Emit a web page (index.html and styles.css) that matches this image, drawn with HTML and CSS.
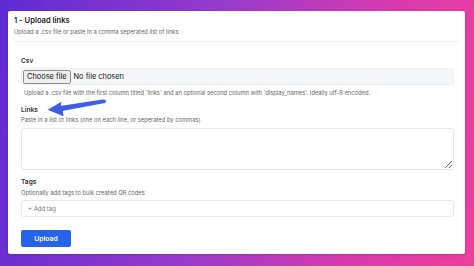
FILE: index.html
```html
<!DOCTYPE html>
<html lang="en">
<head>
    <meta charset="UTF-8">
    <title>Upload links</title>
    <link rel="stylesheet" href="styles.css">
</head>
<body>
    <div class="card">
        <div class="card-header">
            <h1 class="title">1 - Upload links</h1>
            <p class="subtitle">Upload a .csv file or paste in a comma seperated list of links</p>
        </div>

        <div class="card-body">
            <div class="field csv-field">
                <label class="label">Csv</label>
                <div class="file-box">
                    <button class="file-button">Choose file</button>
                    <span class="file-name">No file chosen</span>
                </div>
                <p class="help indent">Upload a .csv file with the first column titled 'links' and an optional second column with 'display_names'. Ideally utf-8 encoded.</p>
            </div>

            <div class="field">
                <label class="label">Links</label>
                <p class="help">Paste in a list of links (one on each line, or seperated by commas)</p>
                <textarea class="links-input"></textarea>
            </div>

            <div class="field">
                <label class="label tags-label">Tags</label>
                <p class="help">Optionally add tags to bulk created QR codes</p>
                <div class="tag-input">+ Add tag</div>
            </div>

            <button class="upload-button">Upload</button>
        </div>
    </div>

    <svg class="arrow" width="76" height="32" viewBox="0 0 76 32">
        <path d="M6 19 L22.5 9.5 L21.5 14 L64 7.5 Q69 9.5 65 12.8 L23.5 20.5 L24.5 26.5 Z"
              fill="#3c5de9" stroke="#ffffff" stroke-width="1.4" stroke-linejoin="round"/>
    </svg>
</body>
</html>
```

FILE: styles.css
```css
* {
    margin: 0;
    padding: 0;
    box-sizing: border-box;
    font-family: 'Inter', 'Liberation Sans', sans-serif;
}

body {
    width: 474px;
    height: 266px;
    overflow: hidden;
    position: relative;
    padding: 11px 9px 12px 8px;
    background: linear-gradient(100deg, #5e2bd3 0%, #9a3bcc 45%, #d83aae 75%, #ee3f9e 100%);
}

.card {
    background: #ffffff;
    border-radius: 2px;
    height: 243px;
    box-shadow: 0 1px 3px rgba(0, 0, 0, 0.15);
}

.card-header {
    margin: 0 6px;
    padding-top: 3px;
    padding-bottom: 5px;
    border-bottom: 1px solid #eceef1;
}

.title {
    font-size: 7.6px;
    font-weight: 600;
    line-height: 13px;
    color: #222;
}

.subtitle {
    font-size: 5.8px;
    line-height: 9px;
    color: #666;
}

.card-body {
    padding: 15px 11px 6px 13px;
}

.field {
    margin-bottom: 8px;
}

.csv-field {
    margin-bottom: 9px;
}

.label {
    display: block;
    font-size: 6.6px;
    font-weight: 600;
    line-height: 9px;
    color: #333;
}

.tags-label {
    margin-bottom: 1px;
}

.file-box {
    margin-top: 2px;
    height: 17px;
    background: #f6f7f9;
    border: 1px solid #eef0f3;
    border-radius: 2px;
    display: flex;
    align-items: center;
    gap: 3px;
    padding-left: 1px;
}

.file-button {
    height: 14px;
    padding: 0 3px;
    font-size: 7.4px;
    color: #111;
    background: #efefef;
    border: 1px solid #8f8f8f;
    border-radius: 2px;
}

.file-name {
    font-size: 7.4px;
    color: #111;
}

.help {
    font-size: 5.8px;
    line-height: 9px;
    color: #666;
}

.help.indent {
    margin-top: 3px;
    padding-left: 3px;
}

.links-input {
    display: block;
    width: 100%;
    height: 42px;
    margin-top: 4px;
    border: 1px solid #e6e8eb;
    border-radius: 3px;
    resize: vertical;
}

.tag-input {
    margin-top: 3px;
    height: 17px;
    border: 1px solid #e6e8eb;
    border-radius: 3px;
    padding-left: 6px;
    display: flex;
    align-items: center;
    font-size: 6px;
    color: #777;
}

.upload-button {
    margin-top: 5px;
    width: 50px;
    height: 17px;
    background: #2563eb;
    border: none;
    border-radius: 2px;
    color: #ffffff;
    font-size: 6.8px;
    font-weight: 600;
}

.arrow {
    position: absolute;
    left: 40px;
    top: 91px;
}
```
